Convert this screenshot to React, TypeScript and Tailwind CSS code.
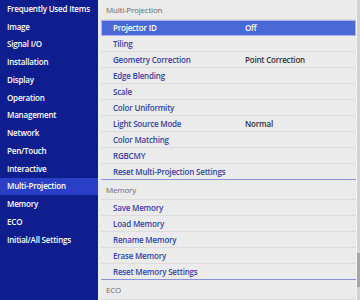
const leftItems = [
  "Frequently Used Items",
  "Image",
  "Signal I/O",
  "Installation",
  "Display",
  "Operation",
  "Management",
  "Network",
  "Pen/Touch",
  "Interactive",
  "Multi-Projection",
  "Memory",
  "ECO",
  "Initial/All Settings",
];

type Row = { label: string; value?: string; active?: boolean };

const sections: { title: string; rows: Row[] }[] = [
  {
    title: "Multi-Projection",
    rows: [
      { label: "Projector ID", value: "Off", active: true },
      { label: "Tiling" },
      { label: "Geometry Correction", value: "Point Correction" },
      { label: "Edge Blending" },
      { label: "Scale" },
      { label: "Color Uniformity" },
      { label: "Light Source Mode", value: "Normal" },
      { label: "Color Matching" },
      { label: "RGBCMY" },
      { label: "Reset Multi-Projection Settings" },
    ],
  },
  {
    title: "Memory",
    rows: [
      { label: "Save Memory" },
      { label: "Load Memory" },
      { label: "Rename Memory" },
      { label: "Erase Memory" },
      { label: "Reset Memory Settings" },
    ],
  },
  { title: "ECO", rows: [] },
];

const App = () => {
  return (
    <div className="w-[360px] h-[300px] flex overflow-hidden bg-[#ebebeb] font-['Open_Sans',sans-serif] text-[8px] tracking-[-0.2px]">
      <div className="w-[98px] shrink-0 bg-[#0f1e8e] flex flex-col">
        {leftItems.map((item) => (
          <div
            key={item}
            className={`h-[17.75px] pl-[7px] flex items-center font-semibold text-white whitespace-nowrap ${
              item === "Multi-Projection" ? "bg-[#2a3fc6]" : ""
            }`}
          >
            {item}
          </div>
        ))}
      </div>
      <div className="flex-1 flex pl-[3px]">
        <div className="flex-1 flex flex-col">
          {sections.map((s) => (
            <div key={s.title}>
              <div className="h-[20px] pl-[5px] flex items-center text-[#6a6a6a] border-b border-[#dcdcdc]">
                {s.title}
              </div>
              {s.rows.map((r, i) => {
                const last = i === s.rows.length - 1;
                return (
                  <div
                    key={r.label}
                    className={`h-[16px] flex items-center font-semibold border-b ${
                      r.active
                        ? "bg-[#4a68d6] text-white border-[#a9b6ee] outline outline-1 -outline-offset-1 outline-[#a9b6ee]"
                        : "text-[#3542a6] " + (last ? "border-[#8a90dc]" : "border-[#dcdcdc]")
                    }`}
                  >
                    <span className="w-[144px] pl-[12px] whitespace-nowrap">{r.label}</span>
                    {r.value && <span className={r.active ? "text-white" : "text-[#333333]"}>{r.value}</span>}
                  </div>
                );
              })}
            </div>
          ))}
        </div>
        <div className="w-[4px] shrink-0 bg-[#d2d2d2] border-l border-[#f4f4f4] flex flex-col">
          <div className="h-[253px]" />
          <div className="h-[34px] bg-[#a6a6a6]" />
        </div>
      </div>
    </div>
  );
};

export default App;
